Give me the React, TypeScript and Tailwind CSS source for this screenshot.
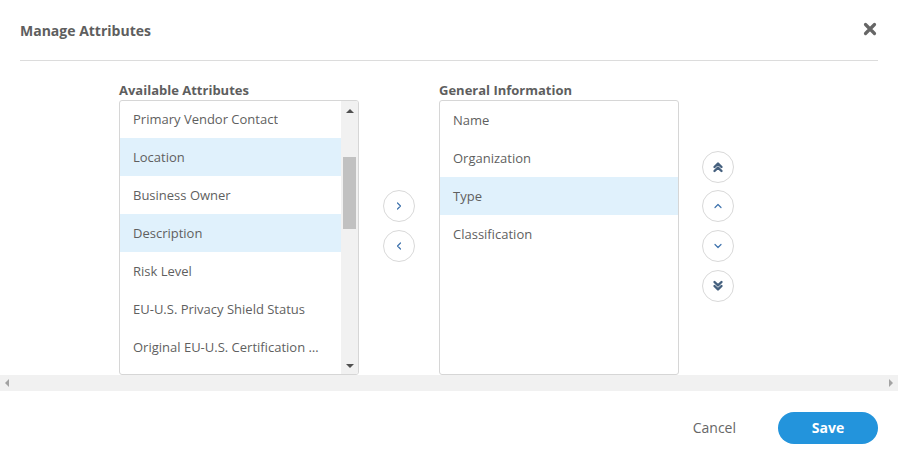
import { useState } from "react";

const available = [
  "Primary Vendor Contact",
  "Location",
  "Business Owner",
  "Description",
  "Risk Level",
  "EU-U.S. Privacy Shield Status",
  "Original EU-U.S. Certification Date",
];

const selectedAttrs = ["Name", "Organization", "Type", "Classification"];

function Chevron({ dir, double }: { dir: "up" | "down" | "left" | "right"; double?: boolean }) {
  const rot = { up: 0, right: 90, down: 180, left: 270 }[dir];
  if (double) {
    return (
      <svg width="12" height="12" viewBox="0 0 12 12" style={{ transform: `rotate(${rot}deg)` }}>
        <path d="M2.5 6 L6 2.6 L9.5 6" fill="none" stroke="#45607e" strokeWidth="2.4" strokeLinecap="round" strokeLinejoin="round" />
        <path d="M2.5 10 L6 6.6 L9.5 10" fill="none" stroke="#45607e" strokeWidth="2.4" strokeLinecap="round" strokeLinejoin="round" />
      </svg>
    );
  }
  return (
    <svg width="12" height="12" viewBox="0 0 12 12" style={{ transform: `rotate(${rot}deg)` }}>
      <path d="M3 7.5 L6 4.5 L9 7.5" fill="none" stroke="#3f73ad" strokeWidth="1.2" strokeLinecap="round" strokeLinejoin="round" />
    </svg>
  );
}

function RoundButton({ children, className = "" }: { children: React.ReactNode; className?: string }) {
  return (
    <button className={`w-8 h-8 rounded-full border border-[#d9d9d9] bg-white flex items-center justify-center ${className}`}>
      {children}
    </button>
  );
}

export default function App() {
  const [leftActive] = useState<number[]>([1, 3]);
  const [rightActive] = useState<number[]>([2]);

  return (
    <div
      className="w-[898px] h-[464px] bg-white flex flex-col text-[#5f5f5f] overflow-hidden"
      style={{ fontFamily: '"Open Sans", "Noto Sans", sans-serif' }}
    >
      {/* Header */}
      <div className="mx-5 h-[61px] flex items-center justify-between border-b border-[#dcdcdc] shrink-0">
        <h1 className="text-[14px] font-bold text-[#5e5e5e]">Manage Attributes</h1>
        <button className="mr-[1px] mt-[-2px]" title="Close">
          <svg width="14" height="14" viewBox="0 0 14 14">
            <path d="M2.5 2.5 L11.5 11.5 M11.5 2.5 L2.5 11.5" stroke="#666" strokeWidth="3.2" strokeLinecap="round" />
          </svg>
        </button>
      </div>

      {/* Body */}
      <div className="h-[314px] shrink-0 flex pl-[119px] pt-[20px]">
        {/* Available */}
        <div className="w-[240px] flex flex-col">
          <div className="text-[13px] font-bold leading-[19px] text-[#5e5e5e]">Available Attributes</div>
          <div className="h-[275px] border border-[#d6d6d6] rounded-[3px] flex overflow-hidden">
            <ul className="flex-1 overflow-hidden mt-[-1px]">
              {available.map((a, i) => (
                <li
                  key={a}
                  className={`h-[38px] flex items-center px-[13px] text-[13px] whitespace-nowrap overflow-hidden ${
                    leftActive.includes(i) ? "bg-[#e0f1fc]" : ""
                  }`}
                >
                  <span className="truncate pt-px">{a}</span>
                </li>
              ))}
            </ul>
            <div className="w-[17px] bg-[#f1f1f1] flex flex-col items-center">
              <div className="h-[19px] flex items-center justify-center">
                <div className="w-0 h-0 border-l-[4px] border-r-[4px] border-b-[4px] border-l-transparent border-r-transparent border-b-[#505050]" />
              </div>
              <div className="mt-[37px] w-[13px] h-[72px] bg-[#c1c1c1]" />
              <div className="flex-1" />
              <div className="h-[17px] flex items-center justify-center">
                <div className="w-0 h-0 border-l-[4px] border-r-[4px] border-t-[4px] border-l-transparent border-r-transparent border-t-[#505050]" />
              </div>
            </div>
          </div>
        </div>

        {/* Move buttons */}
        <div className="w-[80px] flex flex-col items-center pt-[109px] gap-[8px]">
          <RoundButton>
            <Chevron dir="right" />
          </RoundButton>
          <RoundButton>
            <Chevron dir="left" />
          </RoundButton>
        </div>

        {/* Selected */}
        <div className="w-[240px] flex flex-col">
          <div className="text-[13px] font-bold leading-[19px] text-[#5e5e5e]">General Information</div>
          <div className="h-[275px] border border-[#d6d6d6] rounded-[3px] overflow-hidden">
            <ul>
              {selectedAttrs.map((a, i) => (
                <li
                  key={a}
                  className={`h-[38px] flex items-center px-[13px] pt-px text-[13px] ${
                    rightActive.includes(i) ? "bg-[#e0f1fc]" : ""
                  }`}
                >
                  {a}
                </li>
              ))}
            </ul>
          </div>
        </div>

        {/* Order buttons */}
        <div className="w-[78px] flex flex-col items-center pt-[70px]">
          <RoundButton>
            <Chevron dir="up" double />
          </RoundButton>
          <RoundButton className="mt-[7px]">
            <Chevron dir="up" />
          </RoundButton>
          <RoundButton className="mt-[8px]">
            <Chevron dir="down" />
          </RoundButton>
          <RoundButton className="mt-[8px]">
            <Chevron dir="down" double />
          </RoundButton>
        </div>
      </div>

      {/* Horizontal scrollbar */}
      <div className="h-[16px] bg-[#f1f1f1] flex items-center justify-between px-[5px] shrink-0">
        <div className="w-0 h-0 border-t-[4px] border-b-[4px] border-r-[4px] border-t-transparent border-b-transparent border-r-[#a3a3a3]" />
        <div className="w-0 h-0 border-t-[4px] border-b-[4px] border-l-[4px] border-t-transparent border-b-transparent border-l-[#a3a3a3]" />
      </div>

      {/* Footer */}
      <div className="flex-1 flex items-center justify-end pr-5 gap-[42px]">
        <button className="text-[14px] text-[#666]">Cancel</button>
        <button className="w-[100px] h-[32px] rounded-full bg-[#2394dc] text-white text-[14px] font-bold">
          Save
        </button>
      </div>
    </div>
  );
}
